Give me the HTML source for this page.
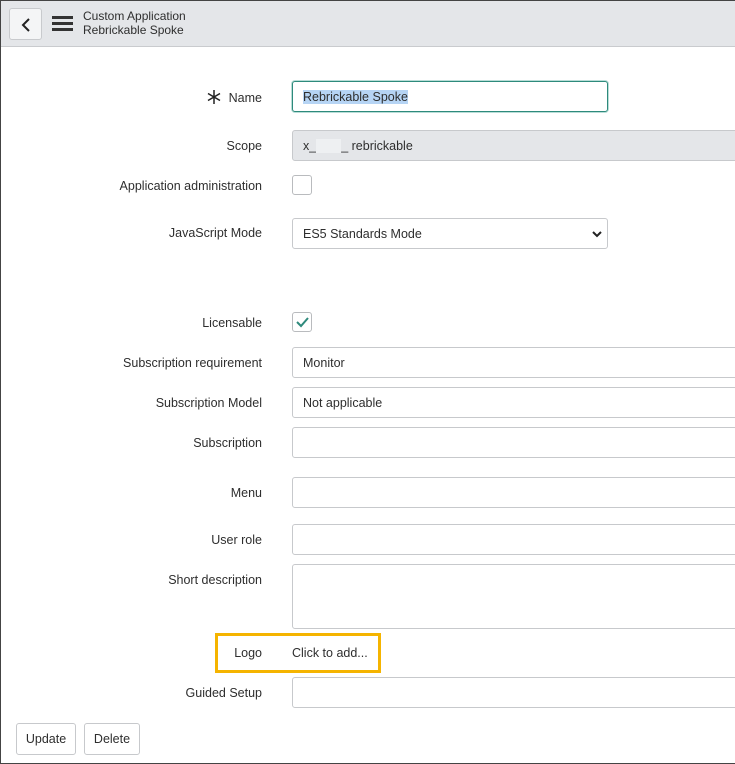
<!DOCTYPE html>
<html><head><meta charset="utf-8"><style>
*{box-sizing:border-box}
body{margin:0;width:735px;height:764px;overflow:hidden;font-family:"Liberation Sans",sans-serif;font-size:12.5px;color:#2e2e2e;background:#fff}
.frame{position:absolute;left:0;top:0;width:735px;height:764px;border:1px solid #444;border-right:none}
.hdr{position:absolute;left:1px;top:1px;width:734px;height:46px;background:#e4e6e9;border-bottom:1px solid #c9cbce}
.back{position:absolute;left:8px;top:7px;width:33px;height:32px;border:1px solid #c8cacd;border-radius:3px;background:#f4f5f6}
.lbl{position:absolute;right:473px;text-align:right;white-space:nowrap;margin-top:1px}
.in{position:absolute;left:292px;border:1px solid #c7c9cc;border-radius:3px;background:#fff;height:31px;padding:0 10px;line-height:31px;white-space:nowrap}
.wide{width:450px}
.cb{position:absolute;left:292px;width:20px;height:20px;border:1px solid #b9bbbe;border-radius:3px;background:#fff}
.btn{position:absolute;top:723px;height:32px;border:1px solid #c7c9cc;border-radius:3px;line-height:31px;text-align:center}
</style></head><body>
<div class="frame"></div>
<div class="hdr">
 <div class="back"><svg width="33" height="32"><path d="M19 10 L13 16 L19 22" fill="none" stroke="#222" stroke-width="2"/></svg></div>
 <div style="position:absolute;left:51px;top:15px;width:21px;height:3px;background:#333"></div>
 <div style="position:absolute;left:51px;top:21px;width:21px;height:3px;background:#333"></div>
 <div style="position:absolute;left:51px;top:27px;width:21px;height:3px;background:#333"></div>
 <div style="position:absolute;left:82px;top:8px;line-height:14px;font-size:12px">Custom Application<br>Rebrickable Spoke</div>
</div>

<div class="lbl" style="top:89px"><svg width="14" height="14" style="vertical-align:-2px;margin-right:8px"><path d="M7 0 V14 M1 3.5 L13 10.5 M1 10.5 L13 3.5" stroke="#222" stroke-width="1.5"/></svg>Name</div>
<div class="in" style="top:81px;width:316px;border:1px solid #2e8a7c;box-shadow:0 0 0 1px #b9ddd7"><span style="background:#b6d4f4">Rebrickable Spoke</span></div>

<div class="lbl" style="top:138px">Scope</div>
<div class="in wide" style="top:130px;background:#e4e6e9">x_<span style="background:#eef0f2;color:#eef0f2">xxxx</span>_ rebrickable</div>

<div class="lbl" style="top:178px">Application administration</div>
<div class="cb" style="top:175px"></div>

<div class="lbl" style="top:225px">JavaScript Mode</div>
<div class="in" style="top:218px;width:316px">ES5 Standards Mode<svg style="position:absolute;right:5px;top:11px" width="10" height="8"><path d="M1 2 L5 6 L9 2" fill="none" stroke="#222" stroke-width="2"/></svg></div>

<div class="lbl" style="top:315px">Licensable</div>
<div class="cb" style="top:312px"><svg width="18" height="18"><path d="M4 9 L8 13 L15 5" fill="none" stroke="#2e8a7c" stroke-width="2"/></svg></div>

<div class="lbl" style="top:355px">Subscription requirement</div>
<div class="in wide" style="top:347px">Monitor</div>
<div class="lbl" style="top:395px">Subscription Model</div>
<div class="in wide" style="top:387px">Not applicable</div>
<div class="lbl" style="top:435px">Subscription</div>
<div class="in wide" style="top:427px"></div>
<div class="lbl" style="top:485px">Menu</div>
<div class="in wide" style="top:477px"></div>
<div class="lbl" style="top:532px">User role</div>
<div class="in wide" style="top:524px"></div>
<div class="lbl" style="top:572px">Short description</div>
<div class="in wide" style="top:564px;height:65px"></div>

<div style="position:absolute;left:215px;top:633px;width:166px;height:40px;border:3px solid #f5b400"></div>
<div class="lbl" style="top:645px">Logo</div>
<div style="position:absolute;left:292px;top:646px">Click to add...</div>

<div class="lbl" style="top:685px">Guided Setup</div>
<div class="in wide" style="top:677px"></div>

<div class="btn" style="left:16px;width:60px">Update</div>
<div class="btn" style="left:84px;width:56px">Delete</div>
</body></html>
